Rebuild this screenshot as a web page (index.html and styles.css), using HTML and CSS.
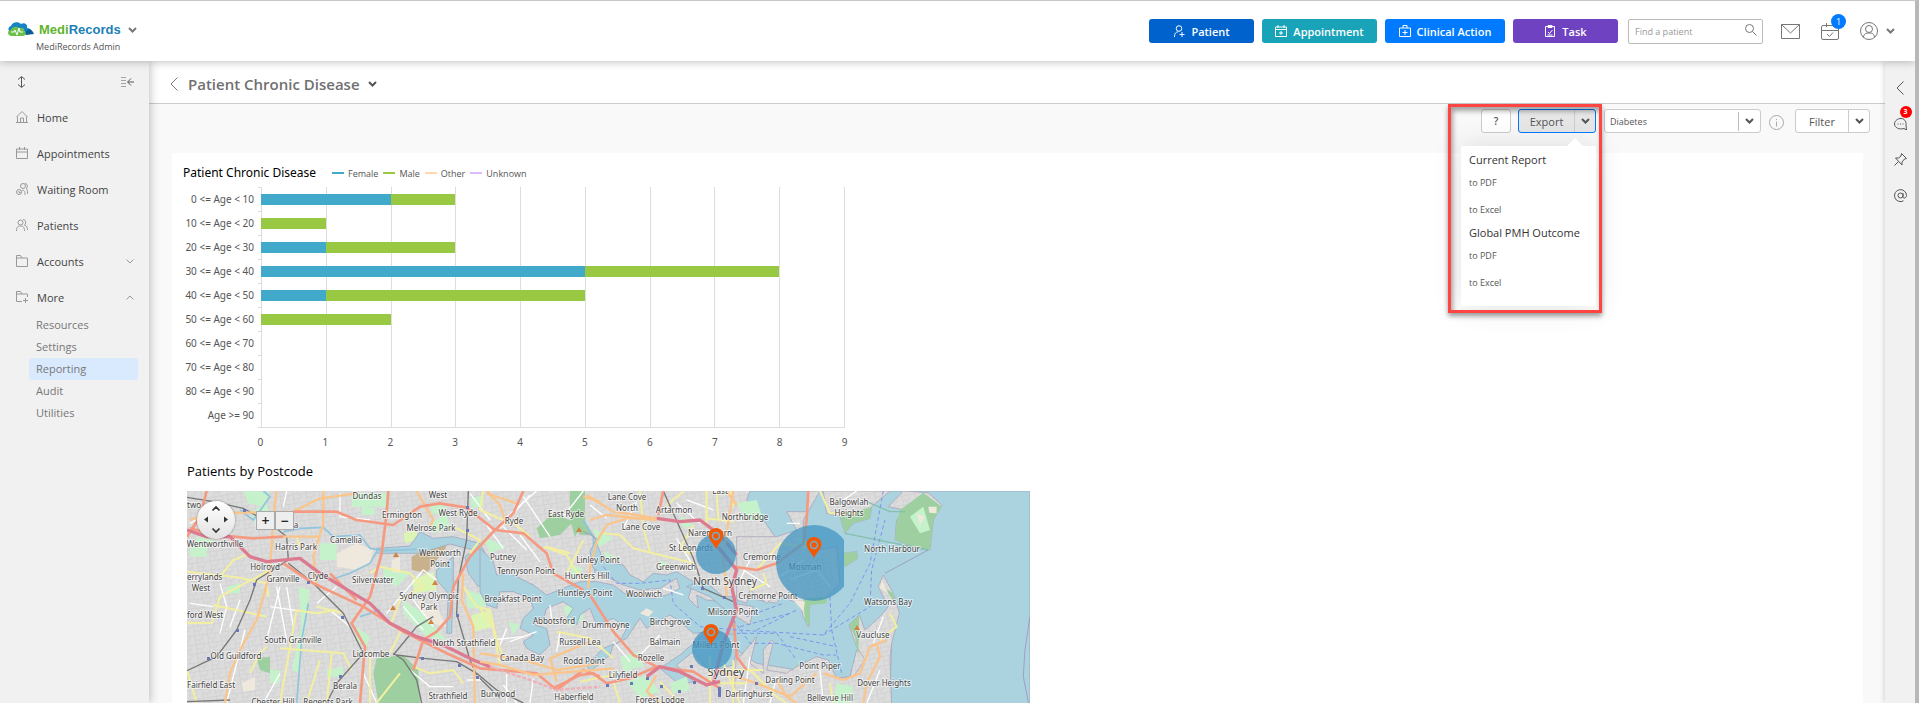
FILE: index.html
```html
<!DOCTYPE html>
<html lang="en">
<head>
    <meta charset="UTF-8">
    <meta name="viewport" content="width=device-width, initial-scale=1.0">
    <title>MediRecords - Patient Chronic Disease</title>
    <link rel="stylesheet" href="styles.css">
</head>
<body>
    <header class="topbar">
        <div class="brand">
            <div class="brand-row">
                <svg class="cloud" viewBox="0 0 27 15" width="27" height="15">
                    <path d="M5 11C1 10 0 5 4 4C5 0 11-1 14 2C18 0 21 3 20 6C23 6 26 9 26 12L19 12C18 8 13 4 5 11Z" fill="#1583c4"/>
                    <path d="M17 11L22 7C25 8 26 10 27 12L19 13Z" fill="#0b5c96"/>
                    <path d="M4 14C0 13 0 8 4 8C5 4 10 4 12 6C16 5 18 7 17 9C20 10 19 14 16 14Z" fill="#6cc04a"/>
                    <path d="M4 10H7L8 8L10 13L12 6L13 10H16" fill="none" stroke="#fff"/>
                </svg>
                <span class="brand-name"><span class="green">Medi</span>Records</span>
                <svg class="chev" viewBox="0 0 9 6" width="9" height="6"><path d="M1 1L4.500 4.500L8 1"/></svg>
            </div>
            <p class="brand-user">MediRecords Admin</p>
        </div>
        <div class="actions">
            <button class="btn patient">
                <svg class="ico" viewBox="0 0 12 12" width="12" height="12"><circle cx="6" cy="3.500" r="2.800"/><path d="M1.500 12C1.500 8 3 7 5 7M9 7V12M6.500 9.500H11.500"/></svg>
                Patient
            </button>
            <button class="btn appointment">
                <svg class="ico" viewBox="0 0 12 12" width="12" height="12"><path d="M.5 2H11.500V11.500H.5ZM.5 4.500H11.500M3 0V3M9 0V3M6 6V10M4 8H8"/></svg>
                Appointment
            </button>
            <button class="btn clinical">
                <svg class="ico" viewBox="0 0 12 12" width="12" height="12"><path d="M.5 3H11.500V11.500H.5ZM4 3V.5H8V3M6 5V10M3.500 7.500H8.500"/></svg>
                Clinical Action
            </button>
            <button class="btn task">
                <svg class="ico" viewBox="0 0 12 12" width="12" height="12"><path d="M1.500 1.500H10.500V11.500H1.500ZM4 .5H8V2.500H4ZM4 7L5.500 8.500L8.500 5M3.500 10H8.500"/></svg>
                Task
            </button>
        </div>
        <div class="search">
            <input type="text" aria-label="Find a patient" placeholder="Find a patient">
            <svg class="line" viewBox="0 0 12 12" width="12" height="12"><circle cx="4.500" cy="4.500" r="4"/><path d="M7.500 7.500L11.500 11.500"/></svg>
        </div>
        <div class="tools">
            <svg class="line" viewBox="0 0 19 15" width="19" height="15"><path d="M.5 .5H18.500V14.500H.5ZM.5 .5L9.500 9L18.500 .5"/></svg>
            <div class="cal">
                <svg class="line" viewBox="0 0 18 17" width="18" height="17"><path d="M2 2.500H16Q17.500 2.500 17.500 4V15Q17.500 16.500 16 16.500H2Q.5 16.500 .5 15V4Q.5 2.500 2 2.500ZM.5 7.500H17.500M5.500 0V4M12.500 0V4M6 11L8.500 13.500L12 9.500"/></svg>
                <span class="badge">1</span>
            </div>
            <div class="user">
                <svg class="line" viewBox="0 0 18 18" width="18" height="18"><circle cx="9" cy="9" r="8.500"/><circle cx="9" cy="7" r="3.500"/><path d="M3.500 15C4 11.500 6 11 9 11S14 11.500 14.500 15"/></svg>
                <svg class="chev" viewBox="0 0 9 6" width="9" height="6"><path d="M1 1L4.500 4.500L8 1"/></svg>
            </div>
        </div>
    </header>

    <div class="layout">
        <nav class="sidebar">
            <div class="side-top">
                <svg class="line dark" viewBox="0 0 9 12" width="9" height="12"><path d="M4.500 1V11M1 3.500L4.500 .5L8 3.500M1 8.500L4.500 11.500L8 8.500"/></svg>
                <svg class="line dark" viewBox="0 0 13 12" width="13" height="12"><path d="M0 1.500H5M0 4.500H5M0 7.500H5M0 10.500H5" opacity=".5"/><path d="M13 6H7M10 2.500L6.500 6L10 9.500"/></svg>
            </div>
            <a class="item" href="#">
                <svg class="line" viewBox="0 0 12 12" width="12" height="12"><path d="M.5 6L6 .5L11.500 6M1.500 5.500V11.500H10.500V5.500M4.500 11.500V7H7.500V11.500M0 11.500H12"/></svg>
                <span>Home</span>
            </a>
            <a class="item" href="#">
                <svg class="line" viewBox="0 0 12 12" width="12" height="12"><path d="M.5 2H11.500V11.500H.5ZM.5 5H11.500M3.500 0V3M8.500 0V3"/></svg>
                <span>Appointments</span>
            </a>
            <a class="item" href="#">
                <svg class="line" viewBox="0 0 12 12" width="12" height="12"><circle cx="7" cy="3" r="2.500"/><circle cx="3" cy="9" r="2.500"/><path d="M9 .5C12 .5 12 5 10 5.500C11.500 6 11.500 8 11.500 11M6 7.500C8 7 9 8 9 12M3 8V9.500H4.500"/></svg>
                <span>Waiting Room</span>
            </a>
            <a class="item" href="#">
                <svg class="line" viewBox="0 0 12 12" width="12" height="12"><circle cx="4.500" cy="3.500" r="2.500"/><path d="M.5 12C.5 8 2 7 4.500 7S8.500 8 8.500 12M7 .5C10.500 .5 10 5.500 8.500 6C11 6.500 11.500 9 11.500 11"/></svg>
                <span>Patients</span>
            </a>
            <a class="item" href="#">
                <svg class="line" viewBox="0 0 12 12" width="12" height="12"><path d="M.5 11.500V.5H4.500L6 3H11.500V11.500ZM.5 3H6"/></svg>
                <span>Accounts</span>
                <svg class="line end" viewBox="0 0 8 5" width="8" height="5"><path d="M.5 .5L4 4L7.500 .5"/></svg>
            </a>
            <a class="item" href="#">
                <svg class="line" viewBox="0 0 12 12" width="12" height="12"><path d="M6 10.500H.5V.5H4.500L6 3H11.500V6M.5 3H6M9.500 7V12M7 9.500H12"/></svg>
                <span>More</span>
                <svg class="line end" viewBox="0 0 8 5" width="8" height="5"><path d="M.5 4.500L4 1L7.500 4.500"/></svg>
            </a>
            <div class="submenu">
                <a href="#">Resources</a>
                <a href="#">Settings</a>
                <a href="#" class="active">Reporting</a>
                <a href="#">Audit</a>
                <a href="#">Utilities</a>
            </div>
        </nav>

        <main class="main">
            <div class="titlebar">
                <svg class="line" viewBox="0 0 8 14" width="8" height="14"><path d="M7.500 .5L1 7L7.500 13.500"/></svg>
                <h1>Patient Chronic Disease</h1>
                <svg class="chev bold" viewBox="0 0 9 6" width="9" height="6"><path d="M1 1L4.500 4.500L8 1"/></svg>
            </div>

            <div class="toolbar">
                <button class="help">?</button>
                <div class="export">
                    <div class="split on">
                        <button>Export</button>
                        <button class="arrow" aria-label="Export options"><svg class="chev bold" viewBox="0 0 9 6" width="9" height="6"><path d="M1 1L4.500 4.500L8 1"/></svg></button>
                    </div>
                    <div class="export-menu">
                        <h3>Current Report</h3>
                        <a href="#">to PDF</a>
                        <a href="#">to Excel</a>
                        <h3>Global PMH Outcome</h3>
                        <a href="#">to PDF</a>
                        <a href="#">to Excel</a>
                    </div>
                    <div class="highlight"></div>
                </div>
                <div class="pick">
                    <select aria-label="Condition">
                        <option>Diabetes</option>
                    </select>
                    <svg class="chev bold" viewBox="0 0 9 6" width="9" height="6"><path d="M1 1L4.500 4.500L8 1"/></svg>
                </div>
                <svg class="line info" viewBox="0 0 15 15" width="15" height="15"><circle cx="7.500" cy="7.500" r="7"/><path d="M7.500 6.500V11.500M7.500 4V5"/></svg>
                <div class="split filter">
                    <button>Filter</button>
                    <button class="arrow" aria-label="Filter options"><svg class="chev bold" viewBox="0 0 9 6" width="9" height="6"><path d="M1 1L4.500 4.500L8 1"/></svg></button>
                </div>
            </div>

            <section class="card">
                <div class="chart-head">
                    <h2>Patient Chronic Disease</h2>
                    <ul class="legend">
                        <li><i class="female"></i>Female</li>
                        <li><i class="male"></i>Male</li>
                        <li><i class="other"></i>Other</li>
                        <li><i class="unknown"></i>Unknown</li>
                    </ul>
                </div>
                <div class="chart">
                    <div class="ages">
                        <span>0 &lt;= Age &lt; 10</span>
                        <span>10 &lt;= Age &lt; 20</span>
                        <span>20 &lt;= Age &lt; 30</span>
                        <span>30 &lt;= Age &lt; 40</span>
                        <span>40 &lt;= Age &lt; 50</span>
                        <span>50 &lt;= Age &lt; 60</span>
                        <span>60 &lt;= Age &lt; 70</span>
                        <span>70 &lt;= Age &lt; 80</span>
                        <span>80 &lt;= Age &lt; 90</span>
                        <span>Age &gt;= 90</span>
                    </div>
                    <div class="ticks"></div>
                    <div class="plot">
                        <div class="row"><b class="female" style="width:22.22%"></b><b class="male" style="width:11.11%"></b></div>
                        <div class="row"><b class="male" style="width:11.11%"></b></div>
                        <div class="row"><b class="female" style="width:11.11%"></b><b class="male" style="width:22.22%"></b></div>
                        <div class="row"><b class="female" style="width:55.55%"></b><b class="male" style="width:33.33%"></b></div>
                        <div class="row"><b class="female" style="width:11.11%"></b><b class="male" style="width:44.44%"></b></div>
                        <div class="row"><b class="male" style="width:22.22%"></b></div>
                        <div class="row"></div>
                        <div class="row"></div>
                        <div class="row"></div>
                        <div class="row"></div>
                    </div>
                </div>
                <div class="axis">
                    <span>0</span><span>1</span><span>2</span><span>3</span><span>4</span><span>5</span><span>6</span><span>7</span><span>8</span><span>9</span>
                </div>

                <h2 class="map-title">Patients by Postcode</h2>
                <div class="map-box">
                    <svg class="map" viewBox="0 0 843 400" width="843" height="400">
                        <defs>
                            <pattern id="streets" width="13" height="9" patternUnits="userSpaceOnUse" patternTransform="rotate(-8)">
                                <rect width="13" height="9" fill="#dddcdc"/>
                                <path d="M0 .5H13M0 5H8M.5 0V9M5 5V9M8 0V5" stroke="#cdcdcd" stroke-width=".6"/>
                            </pattern>
                            <!-- same grid for shapes drawn at a third of the size -->
                            <pattern id="streets-east" href="#streets" patternTransform="rotate(-12) scale(3)"/>
                            <clipPath id="tile"><rect width="657" height="400"/></clipPath>
                            <g id="pin">
                                <path d="M0 0C-2-5-7.500-9-7.500-14A7.500 7 0 0 1 7.500-14C7.500-9 2-5 0 0Z" fill="#f35800"/>
                                <circle cy="-13" r="3.500" fill="#f35800" stroke="#6fb0cf" stroke-width="1.500"/>
                            </g>
                        </defs>
                        <rect width="843" height="400" fill="url(#streets)"/>

                        <!-- parks -->
                        <g transform="translate(-17 -51) scale(.3333)">
                            <path class="park" d="M245 215L290 190L300 225L260 260ZM450 310H500V360H450ZM385 440L420 450L400 600L385 699L365 690L395 560ZM545 160H650V200H545ZM640 380L720 400L680 440L640 420ZM780 250L830 220L840 260L790 280ZM700 480L760 520L830 600L770 590L700 520ZM890 450L960 470L940 510L890 500ZM560 560L600 590L590 620L560 600ZM60 320H110V350H60ZM300 690H330V730H300ZM940 290L1010 320L960 340ZM170 440L210 430V460H170ZM470 690L520 680V710H470ZM1180 500L1240 490V540L1200 560ZM220 153L300 155L280 200L235 190ZM780 190L830 200L815 225L785 220ZM80 290L130 300L110 330L75 315ZM575 200L615 205V225H575ZM900 175L940 165V200L905 205Z"/>
                            <path class="wood" d="M620 655L700 645L745 690L750 789H625L610 700ZM1100 265L1150 220L1210 245L1170 285L1110 295ZM1200 153H1240V250L1215 290L1200 240ZM260 655L300 650V700L270 690Z"/>
                            <path class="lime" d="M905 525L960 510L970 560L910 575ZM725 420L790 395L800 450L735 460ZM700 280L740 270L745 300L705 310Z"/>
                            <path class="marsh" d="M725 350L800 310L830 320L770 400L725 390Z"/>
                            <path class="pale" d="M500 340L560 310L610 330L600 370L560 390L500 380ZM740 480L800 500L830 560L780 550ZM665 360L690 350V400L665 395ZM215 730L255 710V750L220 755Z"/>
                        </g>
                        <g transform="translate(293 -6) scale(.3333)">
                            <path class="park" d="M340 130L400 160L350 190ZM370 200L420 220L390 235ZM270 240L310 250L280 290ZM430 520L470 530L440 570ZM60 280L110 270L90 300ZM540 225L570 240L540 250ZM600 90L640 120L610 130ZM440 590L500 570L540 620L480 640ZM85 410L120 420L100 450Z"/>
                            <path class="wood" d="M270 18H315V110L340 150L300 150L275 100ZM640 425L665 405L680 420L650 435Z"/>
                        </g>

                        <!-- water -->
                        <g transform="translate(-17 -51) scale(.3333)">
                            <path class="water" d="M620 325L720 318L750 275L790 295L850 290L930 310L950 350L940 400L960 420L925 440L895 400L885 350L910 330L840 312L750 340L620 340ZM800 390L850 350L850 440L845 580L830 580L835 460L800 420Z"/>
                            <path class="creek" d="M210 210L250 240L300 170L280 153M340 275L390 265L460 262L490 290L570 285L600 325L640 332L740 328M620 335L600 370L540 400L480 420M415 490L395 600L380 789M570 530L630 510M1240 240L1270 290L1275 400"/>
                        </g>
                        <g transform="translate(293 -6) scale(.3333)">
                            <path class="water" d="M0 190L40 230L50 270L90 265L160 300L200 330L250 310L300 290L350 290L400 300L440 330L520 340L560 330L600 310L590 280L540 310L480 315L430 300L380 275L340 250L330 200L350 160L310 140L340 150L360 200L370 230L430 240L450 270L490 290L520 265L560 270L590 260L640 290L625 340L655 370L650 330L680 345L720 350L780 400V460L700 440L640 445L600 410L570 390L530 410L500 430L480 400L440 460L400 480L390 510L330 560L320 540L370 490L420 470L440 430L400 400L350 420L330 370L300 390L290 420L260 400L280 370L250 350L200 370L190 400L160 405L165 420L200 430L210 480L180 510L140 490L130 470L160 450L120 430L130 400L160 370L150 340L100 320L60 320L50 370L20 360L0 320Z"/>
                            <path class="water" d="M540 550L600 510L680 440L780 450L760 540L690 560L640 500L590 540L640 590L600 600Z"/>
                            <path class="pale" d="M480 385L500 370L520 380L505 395Z"/>
                        </g>
                        <g transform="translate(403 -21) scale(.3333)">
                            <path class="water" d="M480 63H1320V1300H940L900 660L905 520L800 540L780 620L740 625L700 600L620 600L500 580L470 560L440 540L430 440L360 380L290 350L340 330L400 380L450 380L560 400L590 340L555 200L520 150L470 90Z"/>
                            <path class="land" d="M590 125L650 125L655 63H690L640 150L640 200L680 240L740 230L750 340L700 390L660 400L655 470L640 440L630 400L600 390L560 370L530 400L480 360L470 400L440 390L440 200L560 200L620 180ZM490 410L480 465L440 440L430 400ZM700 63H900L845 110L840 145L790 160L765 190L750 140L710 130ZM895 110L940 63L1015 68L1055 105L1030 150L1020 240L985 235L915 210L920 150L945 120ZM760 250L800 245L803 265L765 290ZM450 560L500 500L480 580L520 610L520 540L545 510L550 515L530 600L590 610L620 590L680 560L715 570L740 625L790 620L825 570L800 530L777 465L808 435L825 480L870 440L895 410L865 350L880 315L910 370L928 430L905 520L900 560L925 1300H400L440 540Z"/>
                            <path class="wood" d="M930 120L1000 68L1055 110L1030 150L1020 240L985 235L915 210L920 160ZM750 140L845 110L840 145L790 160L765 190ZM760 250L800 245L803 265L765 290ZM640 385L710 380V400L660 405V470L645 450ZM777 465L808 435L805 560L795 500ZM885 355L910 370L915 400Z"/>
                            <path class="park" d="M240 640L290 620L300 660L250 670ZM90 560L150 545L160 590L100 600ZM440 100L500 90L520 150L470 150ZM740 640L790 650L780 699H730ZM620 200L650 210L640 250ZM960 140L1000 110L1020 180L990 190Z"/>
                            <path class="pale" d="M610 390L645 395L640 425ZM875 330L895 370L870 355ZM1015 110L1040 110L1040 130L1018 128ZM980 130L1005 140L990 165Z"/>
                            <path class="reef" d="M830 95L900 125L945 125M765 190L1015 240"/>
                        </g>

                        <!-- minor streets -->
                        <g transform="translate(-17 -51) scale(.3333)">
                            <path class="white" d="M60 490L130 500M150 430L170 500L150 580M210 480L180 560M225 570L170 789M290 600L330 440M320 440L350 600M350 440L370 560M440 520L300 500M500 440L440 490M480 510L540 560M510 160V230L600 240M700 500L760 570M730 480L790 560M650 520L700 460L760 390L800 420M960 600L1060 590M1100 153L1000 240M1060 170L1140 290M1000 260L1070 330M1240 153L1180 230M900 160L960 240M280 789L330 700M720 690L780 740L850 740M580 700L620 789M890 720H940M1010 700V789M60 250L150 200M350 153L340 200"/>
                        </g>
                        <g transform="translate(293 -6) scale(.3333)">
                            <path class="white" d="M150 30L60 130M20 120L70 190M120 150L180 230M90 470L170 440M60 480L80 430M210 360L215 400M240 440L230 500M330 60L380 100M470 50L430 130M590 160L650 260M610 330L550 310M540 450L470 520M400 470L450 530M70 600L110 654M160 580L150 654M310 620L330 654"/>
                        </g>
                        <g transform="translate(403 -21) scale(.3333)">
                            <path class="white" d="M260 100L330 160M290 90L370 120M460 300L540 350M480 270L450 330M590 160H630M600 330L680 300L720 350M570 320L640 270M760 90L800 63M830 700L870 600M880 440L850 520M690 600L700 699M560 620L540 699M480 560L460 699"/>
                        </g>

                        <!-- secondary roads -->
                        <g transform="translate(-17 -51) scale(.3333)">
                            <path class="yellow" d="M51 395L200 412L290 430L295 470M51 548L125 550L150 470L300 390M130 495L290 530M240 340L190 360L150 410M330 625L520 640L545 690M450 660L410 789M290 620L270 640L240 700M380 510L330 789M375 510L440 520L500 510M440 500L520 520M485 640L470 789M600 400L630 380L720 400L760 440L690 480L660 560M660 640L700 560M880 440L920 500L960 510L980 600L1000 650M730 680L780 700L850 690L880 730M51 690L80 789M850 260L930 300L900 340M1130 320L1200 340M1020 240L1080 290M1240 300L1190 400M940 153L930 210L1000 240M380 290L390 320M600 640V789M690 700L620 789"/>
                        </g>
                        <g transform="translate(293 -6) scale(.3333)">
                            <path class="yellow" d="M0 370L40 430L60 540M190 185L260 210L290 260L330 290M370 145L420 150L460 190L540 210L640 235M480 18L490 130L510 200M230 440L330 460L400 520M400 590L420 654M540 590L600 654M300 590L400 570M560 60L610 20M680 18V100L760 110M640 120L600 190L640 210"/>
                        </g>
                        <g transform="translate(403 -21) scale(.3333)">
                            <path class="yellow" d="M350 63V170M380 63L385 150M420 63L430 110M440 290L500 300L570 220L650 230M520 310L530 340L480 360M690 63L720 130L800 130M400 580L450 699M400 600H520M380 640H470M360 560V699M430 570V699M480 600L560 680L590 699M900 430L920 470L870 510M720 640L730 699"/>
                        </g>

                        <!-- railways -->
                        <g transform="translate(-17 -51) scale(.3333)">
                            <path class="rail" d="M51 172L130 185L220 205L300 250L350 290L355 360L260 420L240 480L200 570L140 650L51 692M355 370L430 430L520 520L580 640L500 730L470 789M895 153L890 300L865 420L860 520L900 660L920 705M670 640L700 660L740 720L755 789M680 645L760 655L860 665L920 700L980 750L1060 789M670 645L740 560L790 530M51 785L180 780"/>
                        </g>
                        <g transform="translate(293 -6) scale(.3333)">
                            <path class="rail" d="M550 18L600 130L640 220L670 310L760 350M0 580L60 640"/>
                        </g>

                        <!-- main roads -->
                        <g transform="translate(-17 -51) scale(.3333)">
                            <path class="orange" d="M320 153L310 230L300 400L260 540L215 620L180 700L165 789M460 153V250L430 350L440 430M60 240L130 220L370 215M370 215L450 175L560 160M740 153L790 240L780 260M310 290L450 290M880 400L875 480L910 560L915 789M930 640L1060 660L1160 690L1290 670M950 160L1040 190M1240 170L1290 185"/>
                            <path class="red" d="M51 290L90 230L110 153M60 265L140 285L250 295L340 290M370 215L500 215L560 240L670 255L750 200L810 190L890 203L930 235L975 270L900 350L850 440L840 530L800 575L760 600M655 153L650 220L635 340L600 470L545 550L585 620L570 789M480 400L560 480M1060 153L1030 220L975 270L1060 280L1130 340L1150 400L1240 450M340 370L430 430L580 500L700 575L830 640L930 685L1100 700L1160 750L1240 690L1290 710M760 600L730 690"/>
                            <path class="motor" d="M51 270L110 290L180 290L240 350L290 365L390 355L450 400L600 490L660 550L740 590L830 620L910 660L960 680"/>
                            <path class="tunnel" d="M960 680L1080 720L1160 750L1290 740"/>
                        </g>
                        <g transform="translate(293 -6) scale(.3333)">
                            <path class="orange" d="M320 30L400 80L470 90L530 100L600 110M530 100L440 100L380 120L350 170L330 250L325 310M20 18L60 60L80 120M0 530L60 540L160 570L280 560L400 550M230 590L210 520L330 470M530 570L500 620L540 654M740 18L770 60"/>
                            <path class="red" d="M330 330L400 440L460 510L530 545M550 18L535 90M220 610L300 570L340 565L380 595L450 580L530 545L640 560L720 610"/>
                            <path class="motor" d="M530 100L600 110L660 105L720 150L770 210M500 575L540 545L600 560L680 600L720 590"/>
                        </g>
                        <g transform="translate(403 -21) scale(.3333)">
                            <path class="orange" d="M0 150L50 135L200 150M430 63L400 250L410 380M560 630L590 680L620 699M700 610L760 630L810 610L840 530L890 510M860 520L870 560L830 640L820 699M380 600L500 640L600 680L680 610"/>
                            <path class="red" d="M655 63L650 150L640 220L560 280L500 300L430 290L380 230M430 440L440 560L470 600"/>
                            <path class="motor" d="M385 230L440 300L425 350L440 420L400 520L370 640"/>
                            <path class="ferry" d="M40 290L80 340L150 340L240 330L250 400L330 470L440 480L700 495L780 400L840 280L880 63M700 495L840 410L845 300L885 150M720 380L725 480L755 610M430 450L480 520L560 520L700 555L740 555M440 490L560 490L620 570M500 480L620 420M470 440L580 400M600 500L740 530M450 470L600 430"/>
                            <path class="border" d="M885 310L1015 240M1320 440L1305 540L1300 620L1320 720"/>
                        </g>

                        <g class="stations">
                            <path d="M56 18h3v3h-3ZM66 92h3v3h-3ZM49 138h3v3h-3ZM20 166h3v3h-3ZM95 36h3v3h-3ZM120 90h3v3h-3ZM154 125h3v3h-3ZM152 184h3v3h-3ZM279 15h3v3h-3ZM279 38h3v3h-3ZM269 123h3v3h-3ZM234 166h3v3h-3ZM271 173h3v3h-3ZM289 185h3v3h-3ZM419 193h3v3h-3ZM443 191h3v3h-3ZM459 186h3v3h-3ZM473 194h3v3h-3ZM491 199h3v3h-3ZM506 190h3v3h-3ZM514 96h3v3h-3ZM536 105h3v3h-3ZM503 174h3v3h-3ZM531 196h3v10h-3ZM568 191h3v3h-3Z"/>
                        </g>
                        <path class="peak" d="M206 66l3-5l3 5ZM245 94l3-5l3 5ZM203 119l3-5l3 5ZM241 133l3-5l3 5ZM389 41l3-5l3 5ZM667 139l3-5l3 5Z"/>

                        <g class="places">
                            <text x="0" y="17" class="start">two</text>
                            <text x="90" y="37">Parramatta</text>
                            <text x="180" y="8">Dundas</text>
                            <text x="251" y="7">West</text>
                            <text x="271" y="25">West Ryde</text>
                            <text x="215" y="27">Ermington</text>
                            <text x="244" y="40">Melrose Park</text>
                            <text x="327" y="33">Ryde</text>
                            <text x="379" y="26">East Ryde</text>
                            <text x="159" y="52">Camellia</text>
                            <text x="28" y="56">Wentworthville</text>
                            <text x="109" y="59">Harris Park</text>
                            <text x="78" y="79">Holroyd</text>
                            <text x="96" y="91">Granville</text>
                            <text x="131" y="88">Clyde</text>
                            <text x="253" y="65">Wentworth</text>
                            <text x="253" y="76">Point</text>
                            <text x="316" y="69">Putney</text>
                            <text x="339" y="83">Tennyson Point</text>
                            <text x="186" y="92">Silverwater</text>
                            <text x="0" y="89" class="start">errylands</text>
                            <text x="14" y="100">West</text>
                            <text x="242" y="108">Sydney Olympic</text>
                            <text x="242" y="119">Park</text>
                            <text x="326" y="111">Breakfast Point</text>
                            <text x="0" y="127" class="start">ford West</text>
                            <text x="367" y="133">Abbotsford</text>
                            <text x="411" y="72">Linley Point</text>
                            <text x="400" y="88">Hunters Hill</text>
                            <text x="398" y="105">Huntleys Point</text>
                            <text x="457" y="106">Woolwich</text>
                            <text x="419" y="137">Drummoyne</text>
                            <text x="393" y="154">Russell Lea</text>
                            <text x="397" y="173">Rodd Point</text>
                            <text x="436" y="187">Lilyfield</text>
                            <text x="335" y="170">Canada Bay</text>
                            <text x="277" y="155">North Strathfield</text>
                            <text x="106" y="152">South Granville</text>
                            <text x="184" y="166">Lidcombe</text>
                            <text x="49" y="168">Old Guildford</text>
                            <text x="0" y="197" class="start">Fairfield East</text>
                            <text x="158" y="198">Berala</text>
                            <text x="261" y="208">Strathfield</text>
                            <text x="311" y="206">Burwood</text>
                            <text x="387" y="209">Haberfield</text>
                            <text x="86" y="214">Chester Hill</text>
                            <text x="141" y="214">Regents Park</text>
                            <text x="440" y="9">Lane Cove</text>
                            <text x="440" y="20">North</text>
                            <text x="487" y="22">Artarmon</text>
                            <text x="533" y="3">East</text>
                            <text x="454" y="39">Lane Cove</text>
                            <text x="558" y="29">Northbridge</text>
                            <text x="523" y="45">Naremburn</text>
                            <text x="504" y="60">St Leonards</text>
                            <text x="489" y="79">Greenwich</text>
                            <text x="538" y="94" class="town">North Sydney</text>
                            <text x="575" y="69">Cremorne</text>
                            <text x="581" y="108">Cremorne Point</text>
                            <text x="546" y="124">Milsons Point</text>
                            <text x="483" y="134">Birchgrove</text>
                            <text x="478" y="154">Balmain</text>
                            <text x="464" y="170">Rozelle</text>
                            <text x="529" y="157">Millers Point</text>
                            <text x="539" y="185" class="city">Sydney</text>
                            <text x="473" y="212">Forest Lodge</text>
                            <text x="562" y="206">Darlinghurst</text>
                            <text x="603" y="192">Darling Point</text>
                            <text x="633" y="178">Point Piper</text>
                            <text x="643" y="210">Bellevue Hill</text>
                            <text x="697" y="195">Dover Heights</text>
                            <text x="686" y="147">Vaucluse</text>
                            <text x="701" y="114">Watsons Bay</text>
                            <text x="618" y="79">Mosman</text>
                            <text x="662" y="14">Balgowlah</text>
                            <text x="662" y="25">Heights</text>
                            <text x="705" y="61">North Harbour</text>
                        </g>

                        <!-- patient counts -->
                        <g class="bubbles" clip-path="url(#tile)">
                            <circle cx="529" cy="63" r="20"/>
                            <circle cx="627" cy="72" r="38"/>
                            <circle cx="525" cy="158" r="20"/>
                        </g>
                        <use href="#pin" x="529" y="58"/>
                        <use href="#pin" x="627" y="67"/>
                        <use href="#pin" x="524" y="154"/>
                    </svg>
                    <button class="pan" aria-label="Pan map">
                        <svg viewBox="0 0 38 38" width="38" height="38"><path d="M15.500 9.500L19 6L22.500 9.500M15.500 27.500L19 31L22.500 27.500" fill="none" stroke="#333" stroke-width="1.700"/><path d="M7 18.500L11 15.500V21.500ZM31 18.500L27 15.500V21.500Z" fill="#333"/></svg>
                    </button>
                    <div class="zoom">
                        <button aria-label="Zoom in">+</button>
                        <button aria-label="Zoom out">−</button>
                    </div>
                </div>
            </section>
        </main>

        <aside class="rail-bar">
            <svg class="line dark" viewBox="0 0 8 14" width="8" height="14"><path d="M7.500 .5L1 7L7.500 13.500"/></svg>
            <div class="chat">
                <svg class="line dark" viewBox="0 0 13 12" width="13" height="12"><path d="M12.500 12L10 10.500C5 12 .5 9.500 .5 6S4 .5 7 .5S12.500 3 12 7L12.500 12Z"/><path d="M3.500 6H9.500" stroke-dasharray="1 1.500"/></svg>
                <span class="alert">3</span>
            </div>
            <svg class="line dark" viewBox="0 0 13 13" width="13" height="13"><path d="M7.500 .5L12.500 5.500L10.500 6L8 9V12L1.500 5H4.500L7 3ZM4.500 8.500L.5 12.500"/></svg>
            <svg class="line dark" viewBox="0 0 13 13" width="13" height="13"><circle cx="6.500" cy="6.500" r="2.500"/><path d="M9 4V8C9.500 10 12.500 9 12.500 6.500A6 6 0 1 0 9.500 11.800"/></svg>
        </aside>
    </div>
</body>
</html>
```
FILE: styles.css
```css
* {
    box-sizing: border-box;
}
body {
    margin: 0;
    height: 100vh;
    display: flex;
    flex-direction: column;
    overflow: hidden;
    border-top: 1px solid #c8c8c8;
    border-right: 4px solid #b8b8b8;
    font-family: "Open Sans", "Noto Sans", sans-serif;
    font-size: 11px;
    color: #555;
    background-color: #f9f9f9;
}
h1, h2, h3, p, ul {
    margin: 0;
    padding: 0;
    font-weight: 400;
}
a {
    color: inherit;
    text-decoration: none;
}
button, input, select {
    font-family: inherit;
    color: inherit;
    padding: 0;
    margin: 0;
}
svg {
    flex: none;
    display: block;
}
.line {
    fill: none;
    stroke: #777;
}
.dark {
    stroke: #555;
}
.chev {
    fill: none;
    stroke: #777;
    stroke-width: 2;
}
.bold {
    stroke: #555;
}

/* top bar */
.topbar {
    height: 60px;
    flex: none;
    display: flex;
    align-items: center;
    background-color: #fff;
    box-shadow: 0 1px 8px rgba(0, 0, 0, 0.25);
    position: relative;
    z-index: 3;
    padding-right: 20px;
}
.brand {
    padding: 13px 0 0 7px;
}
.brand-row {
    display: flex;
    align-items: center;
}
.brand-name {
    font: bold 13px "Liberation Sans", Arial, sans-serif;
    color: #1b7fb8;
    margin: 0 7px 0 5px;
}
.green {
    color: #5fb52f;
}
.brand-user {
    font-size: 9px;
    line-height: 12px;
    margin: 4px 0 0 29px;
}
.actions {
    margin-left: auto;
    display: flex;
    gap: 8px;
}
.btn {
    height: 24px;
    width: 105px;
    border: none;
    border-radius: 3px;
    color: #fff;
    font-size: 11px;
    font-weight: 600;
    display: flex;
    align-items: center;
    justify-content: center;
    gap: 6px;
}
.ico {
    fill: none;
    stroke: #fff;
}
.patient {
    background-color: #0062cc;
}
.appointment {
    background-color: #19a3b8;
    width: 115px;
}
.clinical {
    background-color: #007bff;
    width: 120px;
}
.task {
    background-color: #6f42c1;
}
.search {
    position: relative;
    margin-left: 10px;
}
.search input {
    display: block;
    width: 135px;
    height: 25px;
    border: 1px solid #bbb;
    border-radius: 2px;
    padding-left: 6px;
    font-size: 9px;
}
.search input::placeholder {
    color: #999;
}
.search svg {
    position: absolute;
    right: 6px;
    top: 5px;
}
.tools {
    display: flex;
    align-items: center;
    gap: 21px;
    margin-left: 18px;
}
.cal {
    position: relative;
}
.badge {
    position: absolute;
    left: 10px;
    top: -9px;
    width: 15px;
    height: 15px;
    border-radius: 50%;
    background-color: #007bff;
    color: #fff;
    font-size: 9px;
    line-height: 15px;
    text-align: center;
}
.user {
    display: flex;
    align-items: center;
    gap: 8px;
}

.layout {
    flex: 1;
    min-height: 0;
    display: flex;
}

/* left menu */
.sidebar {
    width: 149px;
    flex: none;
    background-color: #f1f1f1;
    box-shadow: 0 0 10px rgba(0, 0, 0, 0.3);
    position: relative;
    z-index: 2;
}
.side-top {
    display: flex;
    justify-content: space-between;
    align-items: center;
    height: 38px;
    padding: 4px 15px 0 17px;
}
.item {
    display: flex;
    align-items: center;
    height: 36px;
    padding: 0 15px 0 16px;
    color: #444;
}
.item .line {
    stroke: #999;
}
.item span {
    margin-left: 9px;
}
.item .end {
    margin-left: auto;
}
.submenu {
    padding: 0 11px 0 29px;
    margin-top: -1px;
}
.submenu a {
    display: block;
    line-height: 22px;
    padding-left: 7px;
    border-radius: 3px;
    color: #777;
}
.submenu .active {
    background-color: #d9eaff;
}

/* report */
.main {
    flex: 1;
    min-width: 0;
    overflow: hidden;
}
.titlebar {
    height: 43px;
    display: flex;
    align-items: center;
    background-color: #fff;
    border-bottom: 1px solid #ccc;
    padding: 4px 0 0 21px;
}
.titlebar h1 {
    font-size: 15px;
    font-weight: 600;
    color: #707070;
    margin: 0 8px 0 10px;
}
.toolbar {
    display: flex;
    justify-content: flex-end;
    padding: 5px 15px 0 0;
    height: 49px;
}
.help, .split, .pick {
    height: 24px;
    border: 1px solid #ccc;
    border-radius: 3px;
    background-color: #fff;
}
.help {
    width: 30px;
    font-size: 10px;
    font-weight: 600;
    margin-right: 7px;
}
.export {
    position: relative;
    margin-right: 8px;
}
.split {
    display: flex;
    width: 78px;
}
.split button {
    flex: 1;
    border: none;
    background: none;
    font-size: 11px;
}
.split .arrow {
    flex: none;
    width: 21px;
    border-left: 1px solid #ccc;
    display: flex;
    align-items: center;
    justify-content: center;
}
.split.on {
    border-color: #007bff;
    background-color: #e6e6e6;
}
.split.filter {
    width: 75px;
}
.pick {
    position: relative;
    width: 157px;
}
.pick select {
    appearance: none;
    width: 100%;
    height: 22px;
    border: none;
    background: none;
    padding-left: 5px;
    font-size: 9px;
}
.pick svg {
    position: absolute;
    right: 6px;
    top: 8px;
}
.pick::after {
    content: "";
    position: absolute;
    right: 21px;
    top: 2px;
    height: 19px;
    border-left: 1px solid #bbb;
}
.info {
    margin: 6px 11px 0 8px;
    stroke: #aaa;
}
.export-menu {
    position: absolute;
    z-index: 1;
    top: 37px;
    right: 0;
    width: 135px;
    height: 160px;
    padding: 4px 8px;
    border-radius: 2px;
    background-color: #fff;
    box-shadow: 0 0 30px rgba(0, 0, 0, 0.12);
}
.export-menu::before {
    content: "";
    position: absolute;
    right: 13px;
    top: -8px;
    border: 8px solid transparent;
    border-top: none;
    border-bottom-color: #fff;
}
.export-menu h3 {
    font-size: 11px;
    line-height: 19px;
    color: #333;
}
.export-menu a {
    display: block;
    font-size: 9px;
    line-height: 27px;
}
.highlight {
    position: absolute;
    z-index: 2;
    left: -70px;
    right: -6px;
    top: -5px;
    height: 209px;
    border: 3px solid #ff4444;
    box-shadow: 0 3px 5px rgba(0, 0, 0, 0.4), inset 2px 4px 5px rgba(0, 0, 0, 0.35);
    pointer-events: none;
}
.card {
    margin: 0 22px 0 23px;
    background-color: #fff;
    padding: 12px 11px;
}
h2 {
    font-family: "Noto Sans", sans-serif;
    font-size: 12px;
    line-height: 16px;
    color: #000;
}
.chart-head {
    display: flex;
    align-items: center;
}
.legend {
    display: flex;
    list-style: none;
    margin-left: 16px;
    font-size: 9px;
}
.legend li {
    display: flex;
    align-items: center;
    margin-right: 5px;
}
.legend i {
    width: 12px;
    height: 2px;
    margin-right: 4px;
}
.female {
    background-color: #41a9c9;
}
.male {
    background-color: #99c843;
}
.other {
    background-color: #ffd8b0;
}
.unknown {
    background-color: #dcbcfc;
}
.chart {
    display: flex;
    margin-top: 6px;
}
.ages {
    width: 71px;
    display: flex;
    flex-direction: column;
    text-align: right;
    line-height: 24px;
    font-family: "Noto Sans", sans-serif;
    font-size: 10px;
    white-space: nowrap;
}
.ticks {
    width: 3px;
    margin-left: 4px;
    background: repeating-linear-gradient(#ddd 0 1px, transparent 1px 24px);
}
.plot {
    width: 584px;
    border-right: 1px solid #ddd;
    border-bottom: 1px solid #ddd;
    background: repeating-linear-gradient(to right, #ddd 0 1px, transparent 1px calc(100% / 9));
}
.row {
    display: flex;
    align-items: center;
    height: 24px;
}
.row b {
    height: 11px;
}
.axis {
    width: 649px;
    margin-left: 45px;
    padding-top: 6px;
    display: flex;
    font-family: "Noto Sans", sans-serif;
    font-size: 10px;
    line-height: 16px;
}
.axis span {
    flex: 1;
    text-align: center;
}
.map-title {
    font-family: "Open Sans", sans-serif;
    font-size: 13px;
    margin: 13px 0 12px 4px;
}

/* map */
.map-box {
    position: relative;
    width: 843px;
    margin-left: 4px;
}
.park {
    fill: #c5f2ca;
}
.wood {
    fill: #9dcfa0;
}
.lime {
    fill: #dcf5b5;
}
.marsh {
    fill: #c9b28b;
}
.pale {
    fill: #eee8dd;
}
.water {
    fill: #aad3df;
    stroke: #9a9cba;
    stroke-width: 2;
}
.land {
    fill: url(#streets-east);
    stroke: #a79ab5;
    stroke-width: 2;
}
.creek, .reef, .white, .yellow, .orange, .red, .motor, .tunnel, .rail, .ferry, .border {
    fill: none;
    stroke-linejoin: round;
}
.creek {
    stroke: #8fc5dd;
    stroke-width: 5;
}
.reef {
    stroke: #86bfae;
    stroke-width: 4;
}
.white {
    stroke: #fff;
    stroke-width: 4;
}
.yellow {
    stroke: #f3efa0;
    stroke-width: 6;
}
.orange {
    stroke: #fac58c;
    stroke-width: 7;
}
.red {
    stroke: #f59a80;
    stroke-width: 8;
}
.motor {
    stroke: #dc7b90;
    stroke-width: 10;
}
.tunnel {
    stroke: #eeb0b8;
    stroke-width: 7;
    stroke-dasharray: 12 5;
}
.rail {
    stroke: #777;
    stroke-width: 4;
}
.ferry {
    stroke: #7f93ee;
    stroke-width: 3;
    stroke-dasharray: 12 8;
}
.border {
    stroke: #9a86b0;
    stroke-width: 2;
}
.stations {
    fill: #6b78b4;
}
.peak {
    fill: #d08440;
}
.places {
    font-family: "Noto Sans", sans-serif;
    font-size: 8px;
    fill: #444;
    stroke: rgba(255, 255, 255, 0.6);
    stroke-width: 2px;
    stroke-linejoin: round;
    paint-order: stroke;
    text-anchor: middle;
}
.places .start {
    text-anchor: start;
}
.places .town {
    font-size: 10px;
}
.places .city {
    font-size: 11px;
}
.bubbles {
    fill: #4294c2;
    fill-opacity: 0.75;
}
.pan {
    position: absolute;
    left: 10px;
    top: 10px;
    width: 38px;
    height: 38px;
    border: none;
    border-radius: 50%;
    background: linear-gradient(#fff, #e2e2e2);
    box-shadow: 0 0 2px rgba(0, 0, 0, 0.5);
}
.zoom {
    position: absolute;
    left: 69px;
    top: 20px;
    display: flex;
}
.zoom button {
    width: 19px;
    height: 19px;
    border: 1px solid #aaa;
    background-color: #eee;
    color: #222;
    font-size: 14px;
    line-height: 16px;
    font-weight: 600;
}

/* right bar */
.rail-bar {
    width: 30px;
    flex: none;
    display: flex;
    flex-direction: column;
    align-items: center;
    gap: 23px;
    padding-top: 20px;
    background-color: #f1f1f1;
    box-shadow: 0 0 6px rgba(0, 0, 0, 0.2);
    position: relative;
    z-index: 1;
}
.chat {
    position: relative;
}
.alert {
    position: absolute;
    left: 6px;
    top: -12px;
    width: 12px;
    height: 12px;
    border-radius: 50%;
    background-color: #f00;
    color: #fff;
    font-size: 7px;
    font-weight: 700;
    line-height: 12px;
    text-align: center;
}
```
